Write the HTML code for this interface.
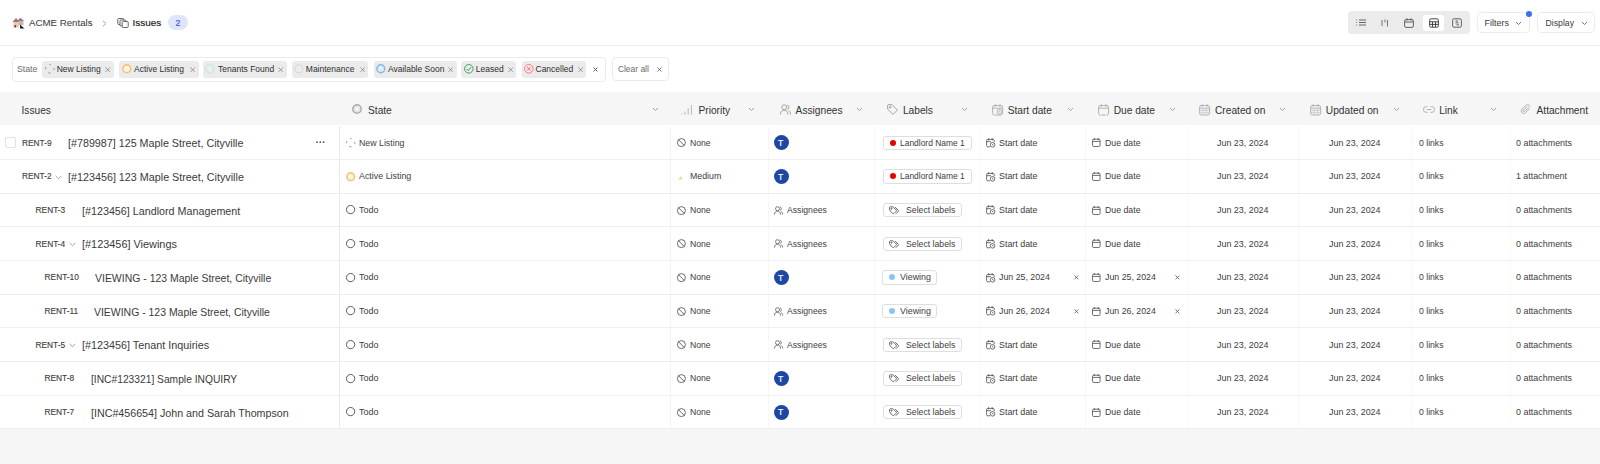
<!DOCTYPE html><html><head><meta charset="utf-8"><style>
html,body{margin:0;padding:0;}
body{width:1600px;height:464px;position:relative;overflow:hidden;background:#fff;font-family:"Liberation Sans",sans-serif;}
.t{position:absolute;height:20px;line-height:20px;white-space:nowrap;}
.i{position:absolute;overflow:visible;}
.b{position:absolute;box-sizing:border-box;}
</style></head><body>
<div class="b" style="left:0;top:45px;width:1600px;height:1px;background:#ececec"></div>
<svg class="i" style="left:12px;top:16.00px;" width="13" height="13" viewBox="0 0 13 13"><path d="M0.5 6 L4 2 L7.5 6 Z" fill="#b56a6a"/><rect x="1.3" y="6" width="5.5" height="5.5" fill="#e9c9b8"/>
<path d="M5 5 L8.5 1.8 L12 5 Z" fill="#8e7d86"/><rect x="6.5" y="5" width="5" height="4" fill="#b9bdb3"/>
<path d="M8 8.5 L12.5 12.5 L8 12.5 Z" fill="#222"/><rect x="2.5" y="9" width="1.6" height="2.5" fill="#6b4a2a"/></svg>
<div class="t" style="left:29px;top:12.80px;font-size:9.7px;color:#444;-webkit-text-stroke:0.08px #444">ACME Rentals</div>
<svg class="i" style="left:101.5px;top:19.50px;" width="5" height="7" viewBox="0 0 5 7"><path d="M1 0.8 L4 3.5 L1 6.2" fill="none" stroke="#9a9a9a" stroke-width="0.9"/></svg>
<svg class="i" style="left:116.5px;top:17.00px;" width="12" height="11" viewBox="0 0 12 11"><g fill="none" stroke="#555" stroke-width="0.9">
<rect x="0.8" y="1.5" width="6" height="6" rx="1"/><rect x="3" y="3" width="6" height="6" rx="1" fill="#fff"/><rect x="5.2" y="4.5" width="6" height="6" rx="1" fill="#fff"/></g></svg>
<div class="t" style="left:132.5px;top:12.80px;font-size:9.97px;color:#1a1a1a;-webkit-text-stroke:0.15px #1a1a1a">Issues</div>
<div class="b" style="left:168px;top:15px;width:19.5px;height:15.2px;border-radius:8px;background:#dfe5fb"></div>
<div class="t" style="left:175.6px;top:12.90px;font-size:8.8px;color:#4a5ad4;-webkit-text-stroke:0.2px #4a5ad4">2</div>
<div class="b" style="left:1348px;top:11.4px;width:122px;height:22.7px;border-radius:4px;background:#ebebeb"></div>
<div class="b" style="left:1423px;top:14.6px;width:20.7px;height:16.5px;border-radius:3px;background:#fff"></div>
<svg class="i" style="left:1356px;top:19.00px;" width="10" height="7" viewBox="0 0 10 7"><g stroke="#555" stroke-width="0.9"><path d="M3 1H10M3 3.5H10M3 6H10"/><path d="M0 1H1.2M0 3.5H1.2M0 6H1.2" stroke="#888"/></g></svg>
<svg class="i" style="left:1381px;top:19.00px;" width="7" height="8" viewBox="0 0 7 8"><g stroke="#666" stroke-width="0.9"><path d="M1 1V7M4 0.5V3.5M6.5 1V7.5"/></g></svg>
<svg class="i" style="left:1404px;top:18.00px;" width="10" height="10" viewBox="0 0 10 10"><g fill="none" stroke="#555" stroke-width="0.9"><rect x="0.6" y="1.6" width="8.8" height="7.8" rx="1.5"/><path d="M0.6 4H9.4M3 0.3V2.5M7 0.3V2.5"/></g></svg>
<svg class="i" style="left:1428.5px;top:18.00px;" width="10" height="10" viewBox="0 0 10 10"><g fill="none" stroke="#333" stroke-width="0.9"><rect x="0.6" y="0.8" width="8.8" height="8.4" rx="1.5"/><path d="M0.6 3.8H9.4M0.6 6.4H9.4M3.5 3.8V9M6.5 3.8V9"/></g></svg>
<svg class="i" style="left:1452px;top:18.00px;" width="10" height="10" viewBox="0 0 10 10"><g fill="none" stroke="#555" stroke-width="0.9"><rect x="0.6" y="0.8" width="8.8" height="8.4" rx="1.5"/><path d="M3.5 3H6M3.5 4.8H6.5M4.5 6.8H7"/></g></svg>
<div class="b" style="left:1476.5px;top:12.2px;width:53.5px;height:21.2px;border-radius:4px;border:1px solid #ececec;background:#fff"></div>
<div class="t" style="left:1484.6px;top:12.80px;font-size:8.97px;color:#3a3a3a;">Filters</div>
<svg class="i" style="left:1514.5px;top:20.50px;" width="7" height="5" viewBox="0 0 7 5"><path d="M1 1 L3.5 3.5 L6 1" fill="none" stroke="#666" stroke-width="0.9"/></svg>
<div class="b" style="left:1525.9px;top:11.4px;width:5.8px;height:5.8px;border-radius:50%;background:#3a6ff0"></div>
<div class="b" style="left:1536.6px;top:12.2px;width:58.8px;height:21.2px;border-radius:4px;border:1px solid #ececec;background:#fff"></div>
<div class="t" style="left:1545.6px;top:12.80px;font-size:8.67px;color:#3a3a3a;">Display</div>
<svg class="i" style="left:1580.5px;top:20.50px;" width="7" height="5" viewBox="0 0 7 5"><path d="M1 1 L3.5 3.5 L6 1" fill="none" stroke="#666" stroke-width="0.9"/></svg>
<div class="b" style="left:11.5px;top:57.4px;width:594px;height:24.2px;border-radius:4px;border:1px solid #ebebeb;background:#fff"></div>
<div class="t" style="left:16.9px;top:58.80px;font-size:8.8px;color:#6b6b6b;">State</div>
<div class="b" style="left:42.2px;top:61.2px;width:71.7px;height:16.5px;border-radius:3px;background:#ebebeb"></div>
<svg class="i" style="left:43.5px;top:63.40px" width="11.6" height="11.6" viewBox="-1 -1 11.6 11.6"><circle cx="4.8" cy="4.8" r="4.2" fill="none" stroke="#8a8a8a" stroke-width="1" stroke-dasharray="2.2 4.40" stroke-dashoffset="1.1" transform="rotate(-90 4.8 4.8)"/></svg>
<div class="t" style="left:56.7px;top:58.80px;font-size:8.5px;color:#2f2f2f;">New Listing</div>
<svg class="i" style="left:105.4px;top:66.70px;" width="5.4" height="5.4" viewBox="0 0 5.4 5.4"><path d="M0.5 0.5 L4.9 4.9 M4.9 0.5 L0.5 4.9" stroke="#888" stroke-width="0.85"/></svg>
<div class="b" style="left:119.4px;top:61.2px;width:79.2px;height:16.5px;border-radius:3px;background:#ebebeb"></div>
<svg class="i" style="left:120.7px;top:63.40px" width="11.6" height="11.6" viewBox="-1 -1 11.6 11.6"><circle cx="4.8" cy="4.8" r="3.9" fill="#fdf3e0" stroke="#f2c47a" stroke-width="1.6"/></svg>
<div class="t" style="left:134px;top:58.80px;font-size:8.5px;color:#2f2f2f;">Active Listing</div>
<svg class="i" style="left:190.1px;top:66.70px;" width="5.4" height="5.4" viewBox="0 0 5.4 5.4"><path d="M0.5 0.5 L4.9 4.9 M4.9 0.5 L0.5 4.9" stroke="#888" stroke-width="0.85"/></svg>
<div class="b" style="left:203px;top:61.2px;width:83.8px;height:16.5px;border-radius:3px;background:#ebebeb"></div>
<svg class="i" style="left:204.3px;top:63.40px" width="11.6" height="11.6" viewBox="-1 -1 11.6 11.6"><circle cx="4.8" cy="4.8" r="4.0" fill="#e4f1ec" stroke="#cfe6dd" stroke-width="1.5"/></svg>
<div class="t" style="left:218px;top:58.80px;font-size:8.5px;color:#2f2f2f;">Tenants Found</div>
<svg class="i" style="left:278.3px;top:66.70px;" width="5.4" height="5.4" viewBox="0 0 5.4 5.4"><path d="M0.5 0.5 L4.9 4.9 M4.9 0.5 L0.5 4.9" stroke="#888" stroke-width="0.85"/></svg>
<div class="b" style="left:291.7px;top:61.2px;width:76.7px;height:16.5px;border-radius:3px;background:#ebebeb"></div>
<svg class="i" style="left:293.0px;top:63.40px" width="11.6" height="11.6" viewBox="-1 -1 11.6 11.6"><circle cx="4.8" cy="4.8" r="4.0" fill="#ececec" stroke="#d9d9d9" stroke-width="1.3"/></svg>
<div class="t" style="left:305.8px;top:58.80px;font-size:8.5px;color:#2f2f2f;">Maintenance</div>
<svg class="i" style="left:359.9px;top:66.70px;" width="5.4" height="5.4" viewBox="0 0 5.4 5.4"><path d="M0.5 0.5 L4.9 4.9 M4.9 0.5 L0.5 4.9" stroke="#888" stroke-width="0.85"/></svg>
<div class="b" style="left:373.7px;top:61.2px;width:82.9px;height:16.5px;border-radius:3px;background:#ebebeb"></div>
<svg class="i" style="left:375.0px;top:63.40px" width="11.6" height="11.6" viewBox="-1 -1 11.6 11.6"><circle cx="4.8" cy="4.8" r="4.0" fill="#cfe6f7" stroke="#86b8e2" stroke-width="1.4"/><path d="M3.0 6.8L4.8 2.8L6.6 6.8" fill="none" stroke="#f2f6fb" stroke-width="1.1"/></svg>
<div class="t" style="left:387.9px;top:58.80px;font-size:8.5px;color:#2f2f2f;">Available Soon</div>
<svg class="i" style="left:448.1px;top:66.70px;" width="5.4" height="5.4" viewBox="0 0 5.4 5.4"><path d="M0.5 0.5 L4.9 4.9 M4.9 0.5 L0.5 4.9" stroke="#888" stroke-width="0.85"/></svg>
<div class="b" style="left:461.3px;top:61.2px;width:54.7px;height:16.5px;border-radius:3px;background:#ebebeb"></div>
<svg class="i" style="left:462.6px;top:63.40px" width="11.6" height="11.6" viewBox="-1 -1 11.6 11.6"><circle cx="4.8" cy="4.8" r="4.3" fill="none" stroke="#3ba55c" stroke-width="1"/><path d="M2.5 4.8999999999999995L4.2 6.6L7.199999999999999 3.1999999999999997" fill="none" stroke="#3ba55c" stroke-width="1"/></svg>
<div class="t" style="left:475.8px;top:58.80px;font-size:8.5px;color:#2f2f2f;">Leased</div>
<svg class="i" style="left:507.5px;top:66.70px;" width="5.4" height="5.4" viewBox="0 0 5.4 5.4"><path d="M0.5 0.5 L4.9 4.9 M4.9 0.5 L0.5 4.9" stroke="#888" stroke-width="0.85"/></svg>
<div class="b" style="left:521.6px;top:61.2px;width:64.7px;height:16.5px;border-radius:3px;background:#ebebeb"></div>
<svg class="i" style="left:522.9px;top:63.40px" width="11.6" height="11.6" viewBox="-1 -1 11.6 11.6"><circle cx="4.8" cy="4.8" r="4.3" fill="#fdeaea" stroke="#ee7b7f" stroke-width="1"/><path d="M3.0 3.0L6.6 6.6M6.6 3.0L3.0 6.6" stroke="#ee6a6f" stroke-width="1"/></svg>
<div class="t" style="left:535.5px;top:58.80px;font-size:8.5px;color:#2f2f2f;">Cancelled</div>
<svg class="i" style="left:577.8px;top:66.70px;" width="5.4" height="5.4" viewBox="0 0 5.4 5.4"><path d="M0.5 0.5 L4.9 4.9 M4.9 0.5 L0.5 4.9" stroke="#888" stroke-width="0.85"/></svg>
<svg class="i" style="left:592.7px;top:67.10px;" width="5" height="5" viewBox="0 0 5 5"><path d="M0.5 0.5 L4.5 4.5 M4.5 0.5 L0.5 4.5" stroke="#555" stroke-width="0.9"/></svg>
<div class="b" style="left:612.4px;top:57.3px;width:56.4px;height:24px;border-radius:4px;border:1px solid #ebebeb;background:#fff"></div>
<div class="t" style="left:617.9px;top:58.80px;font-size:8.45px;color:#6b6b6b;">Clear all</div>
<svg class="i" style="left:656.6px;top:67.10px;" width="5" height="5" viewBox="0 0 5 5"><path d="M0.5 0.5 L4.5 4.5 M4.5 0.5 L0.5 4.5" stroke="#666" stroke-width="0.9"/></svg>
<div class="b" style="left:0;top:92px;width:1600px;height:33.3px;background:#f6f6f6"></div>
<div class="t" style="left:21.5px;top:100.60px;font-size:10.2px;color:#333;-webkit-text-stroke:0.08px #333transform:scaleX(1.0186);transform-origin:0 50%;">Issues</div>
<svg class="i" style="left:351px;top:103.30px" width="12" height="12" viewBox="-1 -1 12 12"><circle cx="5.0" cy="5.0" r="4.2" fill="#f3f3f3" stroke="#ababab" stroke-width="1.5"/><circle cx="5.0" cy="5.0" r="2.4" fill="#fbfbfb" stroke="#d0d0d0" stroke-width="0.8"/></svg>
<div class="t" style="left:368px;top:100.60px;font-size:10.2px;color:#333;-webkit-text-stroke:0.08px #333transform:scaleX(1.0169);transform-origin:0 50%;">State</div>
<svg class="i" style="left:651.5px;top:107.30px;" width="7" height="5" viewBox="0 0 7 5"><path d="M1 1 L3.5 3.5 L6 1" fill="none" stroke="#999" stroke-width="0.9"/></svg>
<svg class="i" style="left:680.7px;top:103.80px;" width="12" height="11" viewBox="0 0 12 11"><g stroke="#b0b0b0" stroke-width="0.9"><path d="M1 10.5V9.5M4 10.5V7.5M7.2 10.5V4M10.4 10.5V1"/></g></svg>
<div class="t" style="left:698.5px;top:100.60px;font-size:10.2px;color:#333;-webkit-text-stroke:0.08px #333transform:scaleX(1.0314);transform-origin:0 50%;">Priority</div>
<svg class="i" style="left:748px;top:107.30px;" width="7" height="5" viewBox="0 0 7 5"><path d="M1 1 L3.5 3.5 L6 1" fill="none" stroke="#999" stroke-width="0.9"/></svg>
<svg class="i" style="left:779.5px;top:103.80px;" width="11" height="11" viewBox="0 0 11 11"><g fill="none" stroke="#999" stroke-width="0.9"><circle cx="4.2" cy="3.2" r="2.4"/><path d="M0.5 10.5C0.5 7.5 2 6.3 4.2 6.3S7.9 7.5 7.9 10.5"/><path d="M7.2 1A2.2 2.2 0 0 1 7.2 5.3M8.6 6.6C9.8 7.2 10.5 8.4 10.5 10.5"/></g></svg>
<div class="t" style="left:795.6px;top:100.60px;font-size:10.2px;color:#333;-webkit-text-stroke:0.08px #333transform:scaleX(0.9997);transform-origin:0 50%;">Assignees</div>
<svg class="i" style="left:856px;top:107.30px;" width="7" height="5" viewBox="0 0 7 5"><path d="M1 1 L3.5 3.5 L6 1" fill="none" stroke="#999" stroke-width="0.9"/></svg>
<svg class="i" style="left:887px;top:103.80px;" width="11" height="11" viewBox="0 0 11 11"><g fill="none" stroke="#999" stroke-width="0.9"><path d="M0.6 1.2V5L6 10.4L10.4 6L5 0.6H1.2Z" stroke-linejoin="round"/><circle cx="3.2" cy="3.2" r="0.9"/></g></svg>
<div class="t" style="left:902.9px;top:100.60px;font-size:10.2px;color:#333;-webkit-text-stroke:0.08px #333transform:scaleX(0.9890);transform-origin:0 50%;">Labels</div>
<svg class="i" style="left:960.5px;top:107.30px;" width="7" height="5" viewBox="0 0 7 5"><path d="M1 1 L3.5 3.5 L6 1" fill="none" stroke="#999" stroke-width="0.9"/></svg>
<svg class="i" style="left:991.6px;top:103.50px;" width="11.5" height="11.5" viewBox="0 0 11.5 11.5"><g fill="none" stroke="#aaa" stroke-width="0.9"><rect x="0.6" y="1.5" width="10" height="9.5" rx="1.8"/><path d="M3.2 0.2V2.8M8 0.2V2.8M0.6 4.2H10.6"/><circle cx="7.3" cy="7.8" r="2.3" fill="#f5f5f5"/><path d="M7.3 6.8V7.9L8 8.4"/></g></svg>
<div class="t" style="left:1007.7px;top:100.60px;font-size:10.2px;color:#333;-webkit-text-stroke:0.08px #333transform:scaleX(1.0320);transform-origin:0 50%;">Start date</div>
<svg class="i" style="left:1066.5px;top:107.30px;" width="7" height="5" viewBox="0 0 7 5"><path d="M1 1 L3.5 3.5 L6 1" fill="none" stroke="#999" stroke-width="0.9"/></svg>
<svg class="i" style="left:1097.8px;top:103.50px;" width="11.5" height="11.5" viewBox="0 0 11.5 11.5"><g fill="none" stroke="#aaa" stroke-width="0.9"><rect x="0.6" y="1.5" width="10" height="9.5" rx="1.8"/><path d="M3.2 0.2V2.8M8 0.2V2.8M0.6 4.2H10.6"/><path d="M3 11V9.5M8 11V9.5" stroke="#f5f5f5" stroke-width="1.5"/></g></svg>
<div class="t" style="left:1113.7px;top:100.60px;font-size:10.2px;color:#333;-webkit-text-stroke:0.08px #333transform:scaleX(0.9889);transform-origin:0 50%;">Due date</div>
<svg class="i" style="left:1168.5px;top:107.30px;" width="7" height="5" viewBox="0 0 7 5"><path d="M1 1 L3.5 3.5 L6 1" fill="none" stroke="#999" stroke-width="0.9"/></svg>
<svg class="i" style="left:1199px;top:103.50px;" width="11.5" height="11.5" viewBox="0 0 11.5 11.5"><g fill="none" stroke="#aaa" stroke-width="0.9"><rect x="0.6" y="1.5" width="10" height="9.5" rx="1.8"/><path d="M3.2 0.2V2.8M8 0.2V2.8M0.6 4.2H10.6"/><path d="M0.6 6.5H10.6M0.6 8.7H10.6M4 4.2V11M7.3 4.2V11" stroke="#ccc"/></g></svg>
<div class="t" style="left:1215px;top:100.60px;font-size:10.2px;color:#333;-webkit-text-stroke:0.08px #333transform:scaleX(0.9999);transform-origin:0 50%;">Created on</div>
<svg class="i" style="left:1279px;top:107.30px;" width="7" height="5" viewBox="0 0 7 5"><path d="M1 1 L3.5 3.5 L6 1" fill="none" stroke="#999" stroke-width="0.9"/></svg>
<svg class="i" style="left:1310px;top:103.50px;" width="11.5" height="11.5" viewBox="0 0 11.5 11.5"><g fill="none" stroke="#aaa" stroke-width="0.9"><rect x="0.6" y="1.5" width="10" height="9.5" rx="1.8"/><path d="M3.2 0.2V2.8M8 0.2V2.8M0.6 4.2H10.6"/><path d="M0.6 6.5H10.6M0.6 8.7H10.6M4 4.2V11M7.3 4.2V11" stroke="#ccc"/></g></svg>
<div class="t" style="left:1325.8px;top:100.60px;font-size:10.2px;color:#333;-webkit-text-stroke:0.08px #333transform:scaleX(1.0154);transform-origin:0 50%;">Updated on</div>
<svg class="i" style="left:1392.8px;top:107.30px;" width="7" height="5" viewBox="0 0 7 5"><path d="M1 1 L3.5 3.5 L6 1" fill="none" stroke="#999" stroke-width="0.9"/></svg>
<svg class="i" style="left:1422.7px;top:105.80px;" width="12" height="7" viewBox="0 0 12 7"><g fill="none" stroke="#aaa" stroke-width="0.9"><path d="M4.5 0.6H3.3A2.9 2.9 0 0 0 3.3 6.4H4.5M7.5 0.6H8.7A2.9 2.9 0 0 1 8.7 6.4H7.5M3.8 3.5H8.2"/></g></svg>
<div class="t" style="left:1439.2px;top:100.60px;font-size:10.2px;color:#333;-webkit-text-stroke:0.08px #333transform:scaleX(1.0159);transform-origin:0 50%;">Link</div>
<svg class="i" style="left:1490px;top:107.30px;" width="7" height="5" viewBox="0 0 7 5"><path d="M1 1 L3.5 3.5 L6 1" fill="none" stroke="#999" stroke-width="0.9"/></svg>
<svg class="i" style="left:1520.6px;top:103.80px;" width="10" height="11" viewBox="0 0 10 11"><path d="M8.6 4.6L4.6 8.7C3.5 9.8 1.9 9.8 0.9 8.7C-0.1 7.7 0 6.2 1 5.1L5.3 0.9C6 0.2 7.1 0.2 7.8 0.9C8.5 1.6 8.5 2.7 7.8 3.4L3.7 7.5C3.3 7.9 2.7 7.9 2.3 7.5C1.9 7.1 1.9 6.5 2.3 6.1L6.2 2.2" fill="none" stroke="#aaa" stroke-width="0.9"/></svg>
<div class="t" style="left:1536.5px;top:100.60px;font-size:10.2px;color:#333;-webkit-text-stroke:0.08px #333transform:scaleX(1.0382);transform-origin:0 50%;">Attachment</div>
<div class="b" style="left:339px;top:125.8px;width:1px;height:303.1px;background:#e9e9e9"></div>
<div class="b" style="left:670px;top:125.8px;width:1px;height:303.1px;background:#f4f4f4"></div>
<div class="b" style="left:768px;top:125.8px;width:1px;height:303.1px;background:#f7f7f7"></div>
<div class="b" style="left:874px;top:125.8px;width:1px;height:303.1px;background:#f7f7f7"></div>
<div class="b" style="left:979px;top:125.8px;width:1px;height:303.1px;background:#fafafa"></div>
<div class="b" style="left:1085px;top:125.8px;width:1px;height:303.1px;background:#f5f5f5"></div>
<div class="b" style="left:1188px;top:125.8px;width:1px;height:303.1px;background:#fafafa"></div>
<div class="b" style="left:1298px;top:125.8px;width:1px;height:303.1px;background:#f7f7f7"></div>
<div class="b" style="left:1411px;top:125.8px;width:1px;height:303.1px;background:#f9f9f9"></div>
<div class="b" style="left:1510px;top:125.8px;width:1px;height:303.1px;background:#fafafa"></div>
<div class="b" style="left:0;top:158.97px;width:1600px;height:1px;background:#eeeeee"></div>
<div class="b" style="left:0;top:192.64px;width:1600px;height:1px;background:#eeeeee"></div>
<div class="b" style="left:0;top:226.31px;width:1600px;height:1px;background:#eeeeee"></div>
<div class="b" style="left:0;top:259.98px;width:1600px;height:1px;background:#eeeeee"></div>
<div class="b" style="left:0;top:293.65px;width:1600px;height:1px;background:#eeeeee"></div>
<div class="b" style="left:0;top:327.32px;width:1600px;height:1px;background:#eeeeee"></div>
<div class="b" style="left:0;top:360.99px;width:1600px;height:1px;background:#eeeeee"></div>
<div class="b" style="left:0;top:394.66px;width:1600px;height:1px;background:#eeeeee"></div>
<div class="b" style="left:0;top:428.33px;width:1600px;height:1px;background:#eeeeee"></div>
<div class="b" style="left:0;top:429px;width:1600px;height:35px;background:#f6f6f6"></div>
<div class="b" style="left:5.3px;top:137.33px;width:10.7px;height:10.7px;border-radius:2px;border:1px solid #e3e3e3;background:#fff"></div>
<svg class="i" style="left:315.5px;top:141.13px;" width="9" height="3" viewBox="0 0 9 3"><g fill="#555"><circle cx="1" cy="1.2" r="0.9"/><circle cx="4.3" cy="1.2" r="0.9"/><circle cx="7.6" cy="1.2" r="0.9"/></g></svg>
<div class="t" style="left:21.9px;top:132.63px;font-size:8.35px;color:#404040;-webkit-text-stroke:0.12px #404040">RENT-9</div>
<div class="t" style="left:68.4px;top:133.33px;font-size:10.7px;color:#3a3a3a;transform:scaleX(1.0042);transform-origin:0 50%;">[#789987] 125 Maple Street, Cityville</div>
<svg class="i" style="left:344.5px;top:136.94px" width="11.4" height="11.4" viewBox="-1 -1 11.4 11.4"><circle cx="4.7" cy="4.7" r="4.1000000000000005" fill="none" stroke="#8a8a8a" stroke-width="1" stroke-dasharray="2.2 4.24" stroke-dashoffset="1.1" transform="rotate(-90 4.7 4.7)"/></svg>
<div class="t" style="left:359.4px;top:132.63px;font-size:8.7px;color:#3d3d3d;transform:scaleX(1.0110);transform-origin:0 50%;">New Listing</div>
<svg class="i" style="left:676.5px;top:138.33px;" width="8.6" height="8.6" viewBox="0 0 8.6 8.6"><g fill="none" stroke="#5a5a5a" stroke-width="0.9"><circle cx="4.4" cy="4.6" r="4"/><path d="M1.6 1.8L7.2 7.4"/></g></svg>
<div class="t" style="left:689.6px;top:132.63px;font-size:8.7px;color:#3d3d3d;transform:scaleX(0.9961);transform-origin:0 50%;">None</div>
<div class="b" style="left:773.6px;top:135.23px;width:15px;height:15px;border-radius:50%;background:#1e47a3"></div>
<div class="t" style="left:778.0px;top:132.94px;font-size:8.6px;color:#fff;-webkit-text-stroke:0.2px #fff">T</div>
<div class="b" style="left:882.6px;top:135.53px;width:89px;height:14.3px;border-radius:3px;border:1px solid #dedede;background:#fff"></div>
<div class="b" style="left:889.6px;top:139.63px;width:6px;height:6px;border-radius:50%;background:#e60000"></div>
<div class="t" style="left:900.4px;top:132.63px;font-size:8.7px;color:#3d3d3d;transform:scaleX(0.9722);transform-origin:0 50%;">Landlord Name 1</div>
<svg class="i" style="left:986px;top:138.03px;" width="9.5" height="9.5" viewBox="0 0 9.5 9.5"><g fill="none" stroke="#555" stroke-width="0.85"><path d="M4 8.8H1.8A1.2 1.2 0 0 1 0.6 7.6V2.6A1.2 1.2 0 0 1 1.8 1.4H7A1.2 1.2 0 0 1 8.2 2.6V4"/><path d="M2.6 0.2V2.4M6.2 0.2V2.4M0.6 3.7H5"/><circle cx="6.6" cy="6.8" r="2.3"/><path d="M6.6 5.9V6.9L7.3 7.4"/></g></svg>
<div class="t" style="left:999px;top:132.63px;font-size:8.7px;color:#3d3d3d;transform:scaleX(1.0220);transform-origin:0 50%;">Start date</div>
<svg class="i" style="left:1091.8px;top:138.23px;" width="8.6" height="9" viewBox="0 0 8.6 9"><g fill="none" stroke="#555" stroke-width="0.85"><rect x="0.5" y="1.2" width="7.6" height="7.3" rx="1.3"/><path d="M2.3 0V2M6.3 0V2M0.5 3.4H8.1"/></g></svg>
<div class="t" style="left:1105px;top:132.63px;font-size:8.7px;color:#3d3d3d;transform:scaleX(1.0066);transform-origin:0 50%;">Due date</div>
<div class="t" style="left:1217px;top:132.63px;font-size:8.7px;color:#3d3d3d;transform:scaleX(1.0249);transform-origin:0 50%;">Jun 23, 2024</div>
<div class="t" style="left:1329.4px;top:132.63px;font-size:8.7px;color:#3d3d3d;transform:scaleX(1.0249);transform-origin:0 50%;">Jun 23, 2024</div>
<div class="t" style="left:1419px;top:132.63px;font-size:8.7px;color:#3d3d3d;transform:scaleX(0.9949);transform-origin:0 50%;">0 links</div>
<div class="t" style="left:1515.8px;top:132.63px;font-size:8.7px;color:#3d3d3d;transform:scaleX(1.0261);transform-origin:0 50%;">0 attachments</div>
<div class="t" style="left:21.9px;top:166.31px;font-size:8.35px;color:#404040;-webkit-text-stroke:0.12px #404040">RENT-2</div>
<svg class="i" style="left:55.4px;top:174.81px;" width="7" height="5" viewBox="0 0 7 5"><path d="M0.6 0.8L3.5 3.7L6.4 0.8" fill="none" stroke="#999" stroke-width="0.9"/></svg>
<div class="t" style="left:67.6px;top:167.00px;font-size:10.7px;color:#3a3a3a;transform:scaleX(1.0070);transform-origin:0 50%;">[#123456] 123 Maple Street, Cityville</div>
<svg class="i" style="left:344.5px;top:170.61px" width="11.4" height="11.4" viewBox="-1 -1 11.4 11.4"><circle cx="4.7" cy="4.7" r="3.8000000000000003" fill="#fdf3e0" stroke="#f2c47a" stroke-width="1.6"/></svg>
<div class="t" style="left:359.4px;top:166.31px;font-size:8.7px;color:#3d3d3d;transform:scaleX(1.0217);transform-origin:0 50%;">Active Listing</div>
<svg class="i" style="left:676.5px;top:174.81px;" width="6" height="6" viewBox="0 0 6 6"><path d="M0.5 4.5L5 1V4.5Z" fill="#ecd98c"/></svg>
<div class="t" style="left:689.6px;top:166.31px;font-size:8.7px;color:#3d3d3d;transform:scaleX(1.0095);transform-origin:0 50%;">Medium</div>
<div class="b" style="left:773.6px;top:168.91px;width:15px;height:15px;border-radius:50%;background:#1e47a3"></div>
<div class="t" style="left:778.0px;top:166.61px;font-size:8.6px;color:#fff;-webkit-text-stroke:0.2px #fff">T</div>
<div class="b" style="left:882.6px;top:169.21px;width:89px;height:14.3px;border-radius:3px;border:1px solid #dedede;background:#fff"></div>
<div class="b" style="left:889.6px;top:173.31px;width:6px;height:6px;border-radius:50%;background:#e60000"></div>
<div class="t" style="left:900.4px;top:166.31px;font-size:8.7px;color:#3d3d3d;transform:scaleX(0.9722);transform-origin:0 50%;">Landlord Name 1</div>
<svg class="i" style="left:986px;top:171.71px;" width="9.5" height="9.5" viewBox="0 0 9.5 9.5"><g fill="none" stroke="#555" stroke-width="0.85"><path d="M4 8.8H1.8A1.2 1.2 0 0 1 0.6 7.6V2.6A1.2 1.2 0 0 1 1.8 1.4H7A1.2 1.2 0 0 1 8.2 2.6V4"/><path d="M2.6 0.2V2.4M6.2 0.2V2.4M0.6 3.7H5"/><circle cx="6.6" cy="6.8" r="2.3"/><path d="M6.6 5.9V6.9L7.3 7.4"/></g></svg>
<div class="t" style="left:999px;top:166.31px;font-size:8.7px;color:#3d3d3d;transform:scaleX(1.0220);transform-origin:0 50%;">Start date</div>
<svg class="i" style="left:1091.8px;top:171.91px;" width="8.6" height="9" viewBox="0 0 8.6 9"><g fill="none" stroke="#555" stroke-width="0.85"><rect x="0.5" y="1.2" width="7.6" height="7.3" rx="1.3"/><path d="M2.3 0V2M6.3 0V2M0.5 3.4H8.1"/></g></svg>
<div class="t" style="left:1105px;top:166.31px;font-size:8.7px;color:#3d3d3d;transform:scaleX(1.0066);transform-origin:0 50%;">Due date</div>
<div class="t" style="left:1217px;top:166.31px;font-size:8.7px;color:#3d3d3d;transform:scaleX(1.0249);transform-origin:0 50%;">Jun 23, 2024</div>
<div class="t" style="left:1329.4px;top:166.31px;font-size:8.7px;color:#3d3d3d;transform:scaleX(1.0249);transform-origin:0 50%;">Jun 23, 2024</div>
<div class="t" style="left:1419px;top:166.31px;font-size:8.7px;color:#3d3d3d;transform:scaleX(0.9949);transform-origin:0 50%;">0 links</div>
<div class="t" style="left:1515.8px;top:166.31px;font-size:8.7px;color:#3d3d3d;transform:scaleX(1.0133);transform-origin:0 50%;">1 attachment</div>
<div class="t" style="left:35.6px;top:199.97px;font-size:8.35px;color:#404040;-webkit-text-stroke:0.12px #404040">RENT-3</div>
<div class="t" style="left:81.9px;top:200.67px;font-size:10.7px;color:#3a3a3a;transform:scaleX(1.0053);transform-origin:0 50%;">[#123456] Landlord Management</div>
<svg class="i" style="left:344.8px;top:204.38px" width="11.2" height="11.2" viewBox="-1 -1 11.2 11.2"><circle cx="4.6" cy="4.6" r="4.1499999999999995" fill="none" stroke="#5c5c5c" stroke-width="1"/></svg>
<div class="t" style="left:359.4px;top:199.97px;font-size:8.7px;color:#3d3d3d;transform:scaleX(1.0295);transform-origin:0 50%;">Todo</div>
<svg class="i" style="left:676.5px;top:205.67px;" width="8.6" height="8.6" viewBox="0 0 8.6 8.6"><g fill="none" stroke="#5a5a5a" stroke-width="0.9"><circle cx="4.4" cy="4.6" r="4"/><path d="M1.6 1.8L7.2 7.4"/></g></svg>
<div class="t" style="left:689.6px;top:199.97px;font-size:8.7px;color:#3d3d3d;transform:scaleX(0.9961);transform-origin:0 50%;">None</div>
<svg class="i" style="left:773.8px;top:205.78px;" width="9" height="9" viewBox="0 0 9 9"><g fill="none" stroke="#666" stroke-width="0.85"><circle cx="3.5" cy="2.7" r="2"/><path d="M0.4 8.6C0.4 6.2 1.7 5.3 3.5 5.3S6.6 6.2 6.6 8.6"/><path d="M6 0.9A1.8 1.8 0 0 1 6 4.4M7.2 5.6C8.2 6.1 8.7 7 8.7 8.6"/></g></svg>
<div class="t" style="left:786.7px;top:199.97px;font-size:8.7px;color:#3d3d3d;transform:scaleX(0.9927);transform-origin:0 50%;">Assignees</div>
<div class="b" style="left:882.6px;top:202.88px;width:79.1px;height:14.3px;border-radius:3px;border:1px solid #dedede;background:#fff"></div>
<svg class="i" style="left:889px;top:205.97px;" width="11" height="8" viewBox="0 0 11 8"><g fill="none" stroke="#555" stroke-width="0.9" stroke-linejoin="round"><path d="M0.6 1.6V3.6Q0.6 4.3 1.1 4.8L3.8 7.4Q4.4 8 5 7.4L7.2 5.2Q7.8 4.6 7.2 4L4.5 1.3Q4 0.8 3.3 0.8H1.4Q0.6 0.8 0.6 1.6Z"/><path d="M6.2 1.2L9.4 4.4Q9.8 4.8 9.4 5.2L6.9 7.7"/><circle cx="2.5" cy="2.7" r="0.55"/></g></svg>
<div class="t" style="left:905.9px;top:199.97px;font-size:8.7px;color:#3d3d3d;transform:scaleX(1.0007);transform-origin:0 50%;">Select labels</div>
<svg class="i" style="left:986px;top:205.38px;" width="9.5" height="9.5" viewBox="0 0 9.5 9.5"><g fill="none" stroke="#555" stroke-width="0.85"><path d="M4 8.8H1.8A1.2 1.2 0 0 1 0.6 7.6V2.6A1.2 1.2 0 0 1 1.8 1.4H7A1.2 1.2 0 0 1 8.2 2.6V4"/><path d="M2.6 0.2V2.4M6.2 0.2V2.4M0.6 3.7H5"/><circle cx="6.6" cy="6.8" r="2.3"/><path d="M6.6 5.9V6.9L7.3 7.4"/></g></svg>
<div class="t" style="left:999px;top:199.97px;font-size:8.7px;color:#3d3d3d;transform:scaleX(1.0220);transform-origin:0 50%;">Start date</div>
<svg class="i" style="left:1091.8px;top:205.57px;" width="8.6" height="9" viewBox="0 0 8.6 9"><g fill="none" stroke="#555" stroke-width="0.85"><rect x="0.5" y="1.2" width="7.6" height="7.3" rx="1.3"/><path d="M2.3 0V2M6.3 0V2M0.5 3.4H8.1"/></g></svg>
<div class="t" style="left:1105px;top:199.97px;font-size:8.7px;color:#3d3d3d;transform:scaleX(1.0066);transform-origin:0 50%;">Due date</div>
<div class="t" style="left:1217px;top:199.97px;font-size:8.7px;color:#3d3d3d;transform:scaleX(1.0249);transform-origin:0 50%;">Jun 23, 2024</div>
<div class="t" style="left:1329.4px;top:199.97px;font-size:8.7px;color:#3d3d3d;transform:scaleX(1.0249);transform-origin:0 50%;">Jun 23, 2024</div>
<div class="t" style="left:1419px;top:199.97px;font-size:8.7px;color:#3d3d3d;transform:scaleX(0.9949);transform-origin:0 50%;">0 links</div>
<div class="t" style="left:1515.8px;top:199.97px;font-size:8.7px;color:#3d3d3d;transform:scaleX(1.0261);transform-origin:0 50%;">0 attachments</div>
<div class="t" style="left:35.6px;top:233.65px;font-size:8.35px;color:#404040;-webkit-text-stroke:0.12px #404040">RENT-4</div>
<svg class="i" style="left:69.1px;top:242.15px;" width="7" height="5" viewBox="0 0 7 5"><path d="M0.6 0.8L3.5 3.7L6.4 0.8" fill="none" stroke="#999" stroke-width="0.9"/></svg>
<div class="t" style="left:81.9px;top:234.34px;font-size:10.7px;color:#3a3a3a;transform:scaleX(1.0194);transform-origin:0 50%;">[#123456] Viewings</div>
<svg class="i" style="left:344.8px;top:238.05px" width="11.2" height="11.2" viewBox="-1 -1 11.2 11.2"><circle cx="4.6" cy="4.6" r="4.1499999999999995" fill="none" stroke="#5c5c5c" stroke-width="1"/></svg>
<div class="t" style="left:359.4px;top:233.65px;font-size:8.7px;color:#3d3d3d;transform:scaleX(1.0295);transform-origin:0 50%;">Todo</div>
<svg class="i" style="left:676.5px;top:239.34px;" width="8.6" height="8.6" viewBox="0 0 8.6 8.6"><g fill="none" stroke="#5a5a5a" stroke-width="0.9"><circle cx="4.4" cy="4.6" r="4"/><path d="M1.6 1.8L7.2 7.4"/></g></svg>
<div class="t" style="left:689.6px;top:233.65px;font-size:8.7px;color:#3d3d3d;transform:scaleX(0.9961);transform-origin:0 50%;">None</div>
<svg class="i" style="left:773.8px;top:239.45px;" width="9" height="9" viewBox="0 0 9 9"><g fill="none" stroke="#666" stroke-width="0.85"><circle cx="3.5" cy="2.7" r="2"/><path d="M0.4 8.6C0.4 6.2 1.7 5.3 3.5 5.3S6.6 6.2 6.6 8.6"/><path d="M6 0.9A1.8 1.8 0 0 1 6 4.4M7.2 5.6C8.2 6.1 8.7 7 8.7 8.6"/></g></svg>
<div class="t" style="left:786.7px;top:233.65px;font-size:8.7px;color:#3d3d3d;transform:scaleX(0.9927);transform-origin:0 50%;">Assignees</div>
<div class="b" style="left:882.6px;top:236.55px;width:79.1px;height:14.3px;border-radius:3px;border:1px solid #dedede;background:#fff"></div>
<svg class="i" style="left:889px;top:239.65px;" width="11" height="8" viewBox="0 0 11 8"><g fill="none" stroke="#555" stroke-width="0.9" stroke-linejoin="round"><path d="M0.6 1.6V3.6Q0.6 4.3 1.1 4.8L3.8 7.4Q4.4 8 5 7.4L7.2 5.2Q7.8 4.6 7.2 4L4.5 1.3Q4 0.8 3.3 0.8H1.4Q0.6 0.8 0.6 1.6Z"/><path d="M6.2 1.2L9.4 4.4Q9.8 4.8 9.4 5.2L6.9 7.7"/><circle cx="2.5" cy="2.7" r="0.55"/></g></svg>
<div class="t" style="left:905.9px;top:233.65px;font-size:8.7px;color:#3d3d3d;transform:scaleX(1.0007);transform-origin:0 50%;">Select labels</div>
<svg class="i" style="left:986px;top:239.05px;" width="9.5" height="9.5" viewBox="0 0 9.5 9.5"><g fill="none" stroke="#555" stroke-width="0.85"><path d="M4 8.8H1.8A1.2 1.2 0 0 1 0.6 7.6V2.6A1.2 1.2 0 0 1 1.8 1.4H7A1.2 1.2 0 0 1 8.2 2.6V4"/><path d="M2.6 0.2V2.4M6.2 0.2V2.4M0.6 3.7H5"/><circle cx="6.6" cy="6.8" r="2.3"/><path d="M6.6 5.9V6.9L7.3 7.4"/></g></svg>
<div class="t" style="left:999px;top:233.65px;font-size:8.7px;color:#3d3d3d;transform:scaleX(1.0220);transform-origin:0 50%;">Start date</div>
<svg class="i" style="left:1091.8px;top:239.25px;" width="8.6" height="9" viewBox="0 0 8.6 9"><g fill="none" stroke="#555" stroke-width="0.85"><rect x="0.5" y="1.2" width="7.6" height="7.3" rx="1.3"/><path d="M2.3 0V2M6.3 0V2M0.5 3.4H8.1"/></g></svg>
<div class="t" style="left:1105px;top:233.65px;font-size:8.7px;color:#3d3d3d;transform:scaleX(1.0066);transform-origin:0 50%;">Due date</div>
<div class="t" style="left:1217px;top:233.65px;font-size:8.7px;color:#3d3d3d;transform:scaleX(1.0249);transform-origin:0 50%;">Jun 23, 2024</div>
<div class="t" style="left:1329.4px;top:233.65px;font-size:8.7px;color:#3d3d3d;transform:scaleX(1.0249);transform-origin:0 50%;">Jun 23, 2024</div>
<div class="t" style="left:1419px;top:233.65px;font-size:8.7px;color:#3d3d3d;transform:scaleX(0.9949);transform-origin:0 50%;">0 links</div>
<div class="t" style="left:1515.8px;top:233.65px;font-size:8.7px;color:#3d3d3d;transform:scaleX(1.0261);transform-origin:0 50%;">0 attachments</div>
<div class="t" style="left:44.6px;top:267.31px;font-size:8.35px;color:#404040;-webkit-text-stroke:0.12px #404040">RENT-10</div>
<div class="t" style="left:94.8px;top:268.01px;font-size:10.7px;color:#3a3a3a;transform:scaleX(0.9791);transform-origin:0 50%;">VIEWING - 123 Maple Street, Cityville</div>
<svg class="i" style="left:344.8px;top:271.71px" width="11.2" height="11.2" viewBox="-1 -1 11.2 11.2"><circle cx="4.6" cy="4.6" r="4.1499999999999995" fill="none" stroke="#5c5c5c" stroke-width="1"/></svg>
<div class="t" style="left:359.4px;top:267.31px;font-size:8.7px;color:#3d3d3d;transform:scaleX(1.0295);transform-origin:0 50%;">Todo</div>
<svg class="i" style="left:676.5px;top:273.01px;" width="8.6" height="8.6" viewBox="0 0 8.6 8.6"><g fill="none" stroke="#5a5a5a" stroke-width="0.9"><circle cx="4.4" cy="4.6" r="4"/><path d="M1.6 1.8L7.2 7.4"/></g></svg>
<div class="t" style="left:689.6px;top:267.31px;font-size:8.7px;color:#3d3d3d;transform:scaleX(0.9961);transform-origin:0 50%;">None</div>
<div class="b" style="left:773.6px;top:269.92px;width:15px;height:15px;border-radius:50%;background:#1e47a3"></div>
<div class="t" style="left:778.0px;top:267.62px;font-size:8.6px;color:#fff;-webkit-text-stroke:0.2px #fff">T</div>
<div class="b" style="left:882.4px;top:269.92px;width:55px;height:14.8px;border-radius:3px;border:1px solid #dedede;background:#fff"></div>
<div class="b" style="left:889.2px;top:274.21px;width:6.2px;height:6.2px;border-radius:50%;background:#8cc4f2"></div>
<div class="t" style="left:900px;top:267.31px;font-size:8.7px;color:#3d3d3d;transform:scaleX(1.0204);transform-origin:0 50%;">Viewing</div>
<svg class="i" style="left:986px;top:272.71px;" width="9.5" height="9.5" viewBox="0 0 9.5 9.5"><g fill="none" stroke="#555" stroke-width="0.85"><path d="M4 8.8H1.8A1.2 1.2 0 0 1 0.6 7.6V2.6A1.2 1.2 0 0 1 1.8 1.4H7A1.2 1.2 0 0 1 8.2 2.6V4"/><path d="M2.6 0.2V2.4M6.2 0.2V2.4M0.6 3.7H5"/><circle cx="6.6" cy="6.8" r="2.3"/><path d="M6.6 5.9V6.9L7.3 7.4"/></g></svg>
<div class="t" style="left:999px;top:267.31px;font-size:8.7px;color:#3d3d3d;transform:scaleX(1.0129);transform-origin:0 50%;">Jun 25, 2024</div>
<svg class="i" style="left:1073.6px;top:274.92px;" width="4.8" height="4.8" viewBox="0 0 4.8 4.8"><path d="M0.5 0.5 L4.3 4.3 M4.3 0.5 L0.5 4.3" stroke="#666" stroke-width="0.9"/></svg>
<svg class="i" style="left:1091.8px;top:272.92px;" width="8.6" height="9" viewBox="0 0 8.6 9"><g fill="none" stroke="#555" stroke-width="0.85"><rect x="0.5" y="1.2" width="7.6" height="7.3" rx="1.3"/><path d="M2.3 0V2M6.3 0V2M0.5 3.4H8.1"/></g></svg>
<div class="t" style="left:1105px;top:267.31px;font-size:8.7px;color:#3d3d3d;transform:scaleX(1.0129);transform-origin:0 50%;">Jun 25, 2024</div>
<svg class="i" style="left:1175.4px;top:274.92px;" width="4.8" height="4.8" viewBox="0 0 4.8 4.8"><path d="M0.5 0.5 L4.3 4.3 M4.3 0.5 L0.5 4.3" stroke="#666" stroke-width="0.9"/></svg>
<div class="t" style="left:1217px;top:267.31px;font-size:8.7px;color:#3d3d3d;transform:scaleX(1.0249);transform-origin:0 50%;">Jun 23, 2024</div>
<div class="t" style="left:1329.4px;top:267.31px;font-size:8.7px;color:#3d3d3d;transform:scaleX(1.0249);transform-origin:0 50%;">Jun 23, 2024</div>
<div class="t" style="left:1419px;top:267.31px;font-size:8.7px;color:#3d3d3d;transform:scaleX(0.9949);transform-origin:0 50%;">0 links</div>
<div class="t" style="left:1515.8px;top:267.31px;font-size:8.7px;color:#3d3d3d;transform:scaleX(1.0261);transform-origin:0 50%;">0 attachments</div>
<div class="t" style="left:44.5px;top:300.99px;font-size:8.35px;color:#404040;-webkit-text-stroke:0.12px #404040">RENT-11</div>
<div class="t" style="left:93.7px;top:301.69px;font-size:10.7px;color:#3a3a3a;transform:scaleX(0.9774);transform-origin:0 50%;">VIEWING - 123 Maple Street, Cityville</div>
<svg class="i" style="left:344.8px;top:305.38px" width="11.2" height="11.2" viewBox="-1 -1 11.2 11.2"><circle cx="4.6" cy="4.6" r="4.1499999999999995" fill="none" stroke="#5c5c5c" stroke-width="1"/></svg>
<div class="t" style="left:359.4px;top:300.99px;font-size:8.7px;color:#3d3d3d;transform:scaleX(1.0295);transform-origin:0 50%;">Todo</div>
<svg class="i" style="left:676.5px;top:306.69px;" width="8.6" height="8.6" viewBox="0 0 8.6 8.6"><g fill="none" stroke="#5a5a5a" stroke-width="0.9"><circle cx="4.4" cy="4.6" r="4"/><path d="M1.6 1.8L7.2 7.4"/></g></svg>
<div class="t" style="left:689.6px;top:300.99px;font-size:8.7px;color:#3d3d3d;transform:scaleX(0.9961);transform-origin:0 50%;">None</div>
<svg class="i" style="left:773.8px;top:306.79px;" width="9" height="9" viewBox="0 0 9 9"><g fill="none" stroke="#666" stroke-width="0.85"><circle cx="3.5" cy="2.7" r="2"/><path d="M0.4 8.6C0.4 6.2 1.7 5.3 3.5 5.3S6.6 6.2 6.6 8.6"/><path d="M6 0.9A1.8 1.8 0 0 1 6 4.4M7.2 5.6C8.2 6.1 8.7 7 8.7 8.6"/></g></svg>
<div class="t" style="left:786.7px;top:300.99px;font-size:8.7px;color:#3d3d3d;transform:scaleX(0.9927);transform-origin:0 50%;">Assignees</div>
<div class="b" style="left:882.4px;top:303.59px;width:55px;height:14.8px;border-radius:3px;border:1px solid #dedede;background:#fff"></div>
<div class="b" style="left:889.2px;top:307.88px;width:6.2px;height:6.2px;border-radius:50%;background:#8cc4f2"></div>
<div class="t" style="left:900px;top:300.99px;font-size:8.7px;color:#3d3d3d;transform:scaleX(1.0204);transform-origin:0 50%;">Viewing</div>
<svg class="i" style="left:986px;top:306.38px;" width="9.5" height="9.5" viewBox="0 0 9.5 9.5"><g fill="none" stroke="#555" stroke-width="0.85"><path d="M4 8.8H1.8A1.2 1.2 0 0 1 0.6 7.6V2.6A1.2 1.2 0 0 1 1.8 1.4H7A1.2 1.2 0 0 1 8.2 2.6V4"/><path d="M2.6 0.2V2.4M6.2 0.2V2.4M0.6 3.7H5"/><circle cx="6.6" cy="6.8" r="2.3"/><path d="M6.6 5.9V6.9L7.3 7.4"/></g></svg>
<div class="t" style="left:999px;top:300.99px;font-size:8.7px;color:#3d3d3d;transform:scaleX(1.0129);transform-origin:0 50%;">Jun 26, 2024</div>
<svg class="i" style="left:1073.6px;top:308.59px;" width="4.8" height="4.8" viewBox="0 0 4.8 4.8"><path d="M0.5 0.5 L4.3 4.3 M4.3 0.5 L0.5 4.3" stroke="#666" stroke-width="0.9"/></svg>
<svg class="i" style="left:1091.8px;top:306.59px;" width="8.6" height="9" viewBox="0 0 8.6 9"><g fill="none" stroke="#555" stroke-width="0.85"><rect x="0.5" y="1.2" width="7.6" height="7.3" rx="1.3"/><path d="M2.3 0V2M6.3 0V2M0.5 3.4H8.1"/></g></svg>
<div class="t" style="left:1105px;top:300.99px;font-size:8.7px;color:#3d3d3d;transform:scaleX(1.0129);transform-origin:0 50%;">Jun 26, 2024</div>
<svg class="i" style="left:1175.4px;top:308.59px;" width="4.8" height="4.8" viewBox="0 0 4.8 4.8"><path d="M0.5 0.5 L4.3 4.3 M4.3 0.5 L0.5 4.3" stroke="#666" stroke-width="0.9"/></svg>
<div class="t" style="left:1217px;top:300.99px;font-size:8.7px;color:#3d3d3d;transform:scaleX(1.0249);transform-origin:0 50%;">Jun 23, 2024</div>
<div class="t" style="left:1329.4px;top:300.99px;font-size:8.7px;color:#3d3d3d;transform:scaleX(1.0249);transform-origin:0 50%;">Jun 23, 2024</div>
<div class="t" style="left:1419px;top:300.99px;font-size:8.7px;color:#3d3d3d;transform:scaleX(0.9949);transform-origin:0 50%;">0 links</div>
<div class="t" style="left:1515.8px;top:300.99px;font-size:8.7px;color:#3d3d3d;transform:scaleX(1.0261);transform-origin:0 50%;">0 attachments</div>
<div class="t" style="left:35.5px;top:334.65px;font-size:8.35px;color:#404040;-webkit-text-stroke:0.12px #404040">RENT-5</div>
<svg class="i" style="left:69.0px;top:343.15px;" width="7" height="5" viewBox="0 0 7 5"><path d="M0.6 0.8L3.5 3.7L6.4 0.8" fill="none" stroke="#999" stroke-width="0.9"/></svg>
<div class="t" style="left:82px;top:335.35px;font-size:10.7px;color:#3a3a3a;transform:scaleX(1.0105);transform-origin:0 50%;">[#123456] Tenant Inquiries</div>
<svg class="i" style="left:344.8px;top:339.05px" width="11.2" height="11.2" viewBox="-1 -1 11.2 11.2"><circle cx="4.6" cy="4.6" r="4.1499999999999995" fill="none" stroke="#5c5c5c" stroke-width="1"/></svg>
<div class="t" style="left:359.4px;top:334.65px;font-size:8.7px;color:#3d3d3d;transform:scaleX(1.0295);transform-origin:0 50%;">Todo</div>
<svg class="i" style="left:676.5px;top:340.35px;" width="8.6" height="8.6" viewBox="0 0 8.6 8.6"><g fill="none" stroke="#5a5a5a" stroke-width="0.9"><circle cx="4.4" cy="4.6" r="4"/><path d="M1.6 1.8L7.2 7.4"/></g></svg>
<div class="t" style="left:689.6px;top:334.65px;font-size:8.7px;color:#3d3d3d;transform:scaleX(0.9961);transform-origin:0 50%;">None</div>
<svg class="i" style="left:773.8px;top:340.45px;" width="9" height="9" viewBox="0 0 9 9"><g fill="none" stroke="#666" stroke-width="0.85"><circle cx="3.5" cy="2.7" r="2"/><path d="M0.4 8.6C0.4 6.2 1.7 5.3 3.5 5.3S6.6 6.2 6.6 8.6"/><path d="M6 0.9A1.8 1.8 0 0 1 6 4.4M7.2 5.6C8.2 6.1 8.7 7 8.7 8.6"/></g></svg>
<div class="t" style="left:786.7px;top:334.65px;font-size:8.7px;color:#3d3d3d;transform:scaleX(0.9927);transform-origin:0 50%;">Assignees</div>
<div class="b" style="left:882.6px;top:337.55px;width:79.1px;height:14.3px;border-radius:3px;border:1px solid #dedede;background:#fff"></div>
<svg class="i" style="left:889px;top:340.65px;" width="11" height="8" viewBox="0 0 11 8"><g fill="none" stroke="#555" stroke-width="0.9" stroke-linejoin="round"><path d="M0.6 1.6V3.6Q0.6 4.3 1.1 4.8L3.8 7.4Q4.4 8 5 7.4L7.2 5.2Q7.8 4.6 7.2 4L4.5 1.3Q4 0.8 3.3 0.8H1.4Q0.6 0.8 0.6 1.6Z"/><path d="M6.2 1.2L9.4 4.4Q9.8 4.8 9.4 5.2L6.9 7.7"/><circle cx="2.5" cy="2.7" r="0.55"/></g></svg>
<div class="t" style="left:905.9px;top:334.65px;font-size:8.7px;color:#3d3d3d;transform:scaleX(1.0007);transform-origin:0 50%;">Select labels</div>
<svg class="i" style="left:986px;top:340.05px;" width="9.5" height="9.5" viewBox="0 0 9.5 9.5"><g fill="none" stroke="#555" stroke-width="0.85"><path d="M4 8.8H1.8A1.2 1.2 0 0 1 0.6 7.6V2.6A1.2 1.2 0 0 1 1.8 1.4H7A1.2 1.2 0 0 1 8.2 2.6V4"/><path d="M2.6 0.2V2.4M6.2 0.2V2.4M0.6 3.7H5"/><circle cx="6.6" cy="6.8" r="2.3"/><path d="M6.6 5.9V6.9L7.3 7.4"/></g></svg>
<div class="t" style="left:999px;top:334.65px;font-size:8.7px;color:#3d3d3d;transform:scaleX(1.0220);transform-origin:0 50%;">Start date</div>
<svg class="i" style="left:1091.8px;top:340.25px;" width="8.6" height="9" viewBox="0 0 8.6 9"><g fill="none" stroke="#555" stroke-width="0.85"><rect x="0.5" y="1.2" width="7.6" height="7.3" rx="1.3"/><path d="M2.3 0V2M6.3 0V2M0.5 3.4H8.1"/></g></svg>
<div class="t" style="left:1105px;top:334.65px;font-size:8.7px;color:#3d3d3d;transform:scaleX(1.0066);transform-origin:0 50%;">Due date</div>
<div class="t" style="left:1217px;top:334.65px;font-size:8.7px;color:#3d3d3d;transform:scaleX(1.0249);transform-origin:0 50%;">Jun 23, 2024</div>
<div class="t" style="left:1329.4px;top:334.65px;font-size:8.7px;color:#3d3d3d;transform:scaleX(1.0249);transform-origin:0 50%;">Jun 23, 2024</div>
<div class="t" style="left:1419px;top:334.65px;font-size:8.7px;color:#3d3d3d;transform:scaleX(0.9949);transform-origin:0 50%;">0 links</div>
<div class="t" style="left:1515.8px;top:334.65px;font-size:8.7px;color:#3d3d3d;transform:scaleX(1.0261);transform-origin:0 50%;">0 attachments</div>
<div class="t" style="left:44.5px;top:368.32px;font-size:8.35px;color:#404040;-webkit-text-stroke:0.12px #404040">RENT-8</div>
<div class="t" style="left:90.8px;top:369.02px;font-size:10.7px;color:#3a3a3a;transform:scaleX(0.9588);transform-origin:0 50%;">[INC#123321] Sample INQUIRY</div>
<svg class="i" style="left:344.8px;top:372.72px" width="11.2" height="11.2" viewBox="-1 -1 11.2 11.2"><circle cx="4.6" cy="4.6" r="4.1499999999999995" fill="none" stroke="#5c5c5c" stroke-width="1"/></svg>
<div class="t" style="left:359.4px;top:368.32px;font-size:8.7px;color:#3d3d3d;transform:scaleX(1.0295);transform-origin:0 50%;">Todo</div>
<svg class="i" style="left:676.5px;top:374.02px;" width="8.6" height="8.6" viewBox="0 0 8.6 8.6"><g fill="none" stroke="#5a5a5a" stroke-width="0.9"><circle cx="4.4" cy="4.6" r="4"/><path d="M1.6 1.8L7.2 7.4"/></g></svg>
<div class="t" style="left:689.6px;top:368.32px;font-size:8.7px;color:#3d3d3d;transform:scaleX(0.9961);transform-origin:0 50%;">None</div>
<div class="b" style="left:773.6px;top:370.93px;width:15px;height:15px;border-radius:50%;background:#1e47a3"></div>
<div class="t" style="left:778.0px;top:368.62px;font-size:8.6px;color:#fff;-webkit-text-stroke:0.2px #fff">T</div>
<div class="b" style="left:882.6px;top:371.22px;width:79.1px;height:14.3px;border-radius:3px;border:1px solid #dedede;background:#fff"></div>
<svg class="i" style="left:889px;top:374.32px;" width="11" height="8" viewBox="0 0 11 8"><g fill="none" stroke="#555" stroke-width="0.9" stroke-linejoin="round"><path d="M0.6 1.6V3.6Q0.6 4.3 1.1 4.8L3.8 7.4Q4.4 8 5 7.4L7.2 5.2Q7.8 4.6 7.2 4L4.5 1.3Q4 0.8 3.3 0.8H1.4Q0.6 0.8 0.6 1.6Z"/><path d="M6.2 1.2L9.4 4.4Q9.8 4.8 9.4 5.2L6.9 7.7"/><circle cx="2.5" cy="2.7" r="0.55"/></g></svg>
<div class="t" style="left:905.9px;top:368.32px;font-size:8.7px;color:#3d3d3d;transform:scaleX(1.0007);transform-origin:0 50%;">Select labels</div>
<svg class="i" style="left:986px;top:373.72px;" width="9.5" height="9.5" viewBox="0 0 9.5 9.5"><g fill="none" stroke="#555" stroke-width="0.85"><path d="M4 8.8H1.8A1.2 1.2 0 0 1 0.6 7.6V2.6A1.2 1.2 0 0 1 1.8 1.4H7A1.2 1.2 0 0 1 8.2 2.6V4"/><path d="M2.6 0.2V2.4M6.2 0.2V2.4M0.6 3.7H5"/><circle cx="6.6" cy="6.8" r="2.3"/><path d="M6.6 5.9V6.9L7.3 7.4"/></g></svg>
<div class="t" style="left:999px;top:368.32px;font-size:8.7px;color:#3d3d3d;transform:scaleX(1.0220);transform-origin:0 50%;">Start date</div>
<svg class="i" style="left:1091.8px;top:373.93px;" width="8.6" height="9" viewBox="0 0 8.6 9"><g fill="none" stroke="#555" stroke-width="0.85"><rect x="0.5" y="1.2" width="7.6" height="7.3" rx="1.3"/><path d="M2.3 0V2M6.3 0V2M0.5 3.4H8.1"/></g></svg>
<div class="t" style="left:1105px;top:368.32px;font-size:8.7px;color:#3d3d3d;transform:scaleX(1.0066);transform-origin:0 50%;">Due date</div>
<div class="t" style="left:1217px;top:368.32px;font-size:8.7px;color:#3d3d3d;transform:scaleX(1.0249);transform-origin:0 50%;">Jun 23, 2024</div>
<div class="t" style="left:1329.4px;top:368.32px;font-size:8.7px;color:#3d3d3d;transform:scaleX(1.0249);transform-origin:0 50%;">Jun 23, 2024</div>
<div class="t" style="left:1419px;top:368.32px;font-size:8.7px;color:#3d3d3d;transform:scaleX(0.9949);transform-origin:0 50%;">0 links</div>
<div class="t" style="left:1515.8px;top:368.32px;font-size:8.7px;color:#3d3d3d;transform:scaleX(1.0261);transform-origin:0 50%;">0 attachments</div>
<div class="t" style="left:44.5px;top:402.00px;font-size:8.35px;color:#404040;-webkit-text-stroke:0.12px #404040">RENT-7</div>
<div class="t" style="left:90.8px;top:402.69px;font-size:10.7px;color:#3a3a3a;transform:scaleX(1.0002);transform-origin:0 50%;">[INC#456654] John and Sarah Thompson</div>
<svg class="i" style="left:344.8px;top:406.39px" width="11.2" height="11.2" viewBox="-1 -1 11.2 11.2"><circle cx="4.6" cy="4.6" r="4.1499999999999995" fill="none" stroke="#5c5c5c" stroke-width="1"/></svg>
<div class="t" style="left:359.4px;top:402.00px;font-size:8.7px;color:#3d3d3d;transform:scaleX(1.0295);transform-origin:0 50%;">Todo</div>
<svg class="i" style="left:676.5px;top:407.69px;" width="8.6" height="8.6" viewBox="0 0 8.6 8.6"><g fill="none" stroke="#5a5a5a" stroke-width="0.9"><circle cx="4.4" cy="4.6" r="4"/><path d="M1.6 1.8L7.2 7.4"/></g></svg>
<div class="t" style="left:689.6px;top:402.00px;font-size:8.7px;color:#3d3d3d;transform:scaleX(0.9961);transform-origin:0 50%;">None</div>
<div class="b" style="left:773.6px;top:404.60px;width:15px;height:15px;border-radius:50%;background:#1e47a3"></div>
<div class="t" style="left:778.0px;top:402.30px;font-size:8.6px;color:#fff;-webkit-text-stroke:0.2px #fff">T</div>
<div class="b" style="left:882.6px;top:404.89px;width:79.1px;height:14.3px;border-radius:3px;border:1px solid #dedede;background:#fff"></div>
<svg class="i" style="left:889px;top:408.00px;" width="11" height="8" viewBox="0 0 11 8"><g fill="none" stroke="#555" stroke-width="0.9" stroke-linejoin="round"><path d="M0.6 1.6V3.6Q0.6 4.3 1.1 4.8L3.8 7.4Q4.4 8 5 7.4L7.2 5.2Q7.8 4.6 7.2 4L4.5 1.3Q4 0.8 3.3 0.8H1.4Q0.6 0.8 0.6 1.6Z"/><path d="M6.2 1.2L9.4 4.4Q9.8 4.8 9.4 5.2L6.9 7.7"/><circle cx="2.5" cy="2.7" r="0.55"/></g></svg>
<div class="t" style="left:905.9px;top:402.00px;font-size:8.7px;color:#3d3d3d;transform:scaleX(1.0007);transform-origin:0 50%;">Select labels</div>
<svg class="i" style="left:986px;top:407.39px;" width="9.5" height="9.5" viewBox="0 0 9.5 9.5"><g fill="none" stroke="#555" stroke-width="0.85"><path d="M4 8.8H1.8A1.2 1.2 0 0 1 0.6 7.6V2.6A1.2 1.2 0 0 1 1.8 1.4H7A1.2 1.2 0 0 1 8.2 2.6V4"/><path d="M2.6 0.2V2.4M6.2 0.2V2.4M0.6 3.7H5"/><circle cx="6.6" cy="6.8" r="2.3"/><path d="M6.6 5.9V6.9L7.3 7.4"/></g></svg>
<div class="t" style="left:999px;top:402.00px;font-size:8.7px;color:#3d3d3d;transform:scaleX(1.0220);transform-origin:0 50%;">Start date</div>
<svg class="i" style="left:1091.8px;top:407.60px;" width="8.6" height="9" viewBox="0 0 8.6 9"><g fill="none" stroke="#555" stroke-width="0.85"><rect x="0.5" y="1.2" width="7.6" height="7.3" rx="1.3"/><path d="M2.3 0V2M6.3 0V2M0.5 3.4H8.1"/></g></svg>
<div class="t" style="left:1105px;top:402.00px;font-size:8.7px;color:#3d3d3d;transform:scaleX(1.0066);transform-origin:0 50%;">Due date</div>
<div class="t" style="left:1217px;top:402.00px;font-size:8.7px;color:#3d3d3d;transform:scaleX(1.0249);transform-origin:0 50%;">Jun 23, 2024</div>
<div class="t" style="left:1329.4px;top:402.00px;font-size:8.7px;color:#3d3d3d;transform:scaleX(1.0249);transform-origin:0 50%;">Jun 23, 2024</div>
<div class="t" style="left:1419px;top:402.00px;font-size:8.7px;color:#3d3d3d;transform:scaleX(0.9949);transform-origin:0 50%;">0 links</div>
<div class="t" style="left:1515.8px;top:402.00px;font-size:8.7px;color:#3d3d3d;transform:scaleX(1.0261);transform-origin:0 50%;">0 attachments</div>
</body></html>
